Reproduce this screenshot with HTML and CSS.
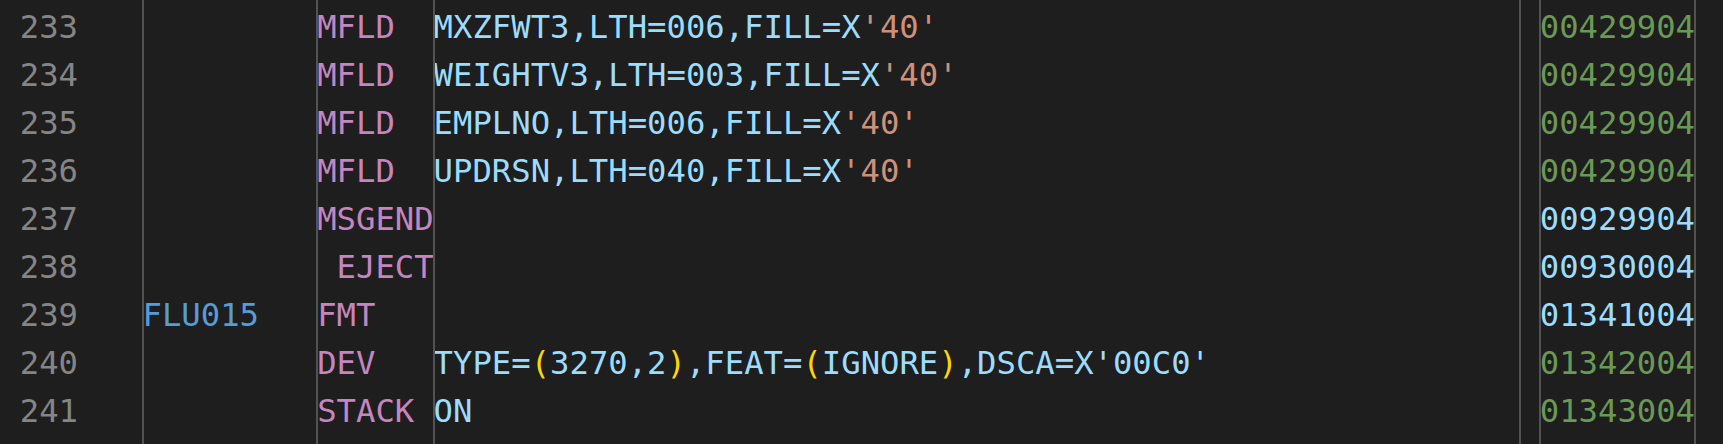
FILE: index.html
```html
<!DOCTYPE html>
<html>
<head>
<meta charset="utf-8">
<link rel="stylesheet" href="styles.css">
</head>
<body>
<div class="editor">
  <div class="gutter">
    <div class="ln">233</div>
    <div class="ln">234</div>
    <div class="ln">235</div>
    <div class="ln">236</div>
    <div class="ln">237</div>
    <div class="ln">238</div>
    <div class="ln">239</div>
    <div class="ln">240</div>
    <div class="ln">241</div>
  </div>
  <div class="code">
    <div class="ruler r0"></div>
    <div class="ruler r9"></div>
    <div class="ruler r15"></div>
    <div class="ruler r71"></div>
    <div class="ruler r72"></div>
    <div class="ruler r80"></div>
    <div class="line"><span class="lbl"></span><span class="op">MFLD</span><span class="arg">MXZFWT3,LTH=006,FILL=X<span class="str">'40'</span></span><span class="seq cmt">00429904</span></div>
    <div class="line"><span class="lbl"></span><span class="op">MFLD</span><span class="arg">WEIGHTV3,LTH=003,FILL=X<span class="str">'40'</span></span><span class="seq cmt">00429904</span></div>
    <div class="line"><span class="lbl"></span><span class="op">MFLD</span><span class="arg">EMPLNO,LTH=006,FILL=X<span class="str">'40'</span></span><span class="seq cmt">00429904</span></div>
    <div class="line"><span class="lbl"></span><span class="op">MFLD</span><span class="arg">UPDRSN,LTH=040,FILL=X<span class="str">'40'</span></span><span class="seq cmt">00429904</span></div>
    <div class="line"><span class="lbl"></span><span class="op">MSGEND</span><span class="arg"></span><span class="seq num">00929904</span></div>
    <div class="line"><span class="lbl"></span><span class="op"> EJECT</span><span class="arg"></span><span class="seq num">00930004</span></div>
    <div class="line"><span class="lbl">FLU015</span><span class="op">FMT</span><span class="arg"></span><span class="seq num">01341004</span></div>
    <div class="line"><span class="lbl"></span><span class="op">DEV</span><span class="arg">TYPE=<span class="br">(</span>3270,2<span class="br">)</span>,FEAT=<span class="br">(</span>IGNORE<span class="br">)</span>,DSCA=X'00C0'</span><span class="seq cmt">01342004</span></div>
    <div class="line"><span class="lbl"></span><span class="op">STACK</span><span class="arg">ON</span><span class="seq cmt">01343004</span></div>
  </div>
</div>
</body>
</html>
```
FILE: styles.css
```css
html, body {
  margin: 0;
  padding: 0;
  background: #1e1e1e;
}
body {
  width: 1723px;
  height: 444px;
  overflow: hidden;
}
.editor {
  display: flex;
  height: 444px;
  font-family: "DejaVu Sans Mono", monospace;
  font-size: 32.24px;
  line-height: 48px;
  background: #1e1e1e;
}
.gutter {
  width: 78px;
  padding-right: 64.5px;
  padding-top: 3px;
  flex: none;
  color: #858585;
  text-align: right;
}
.code {
  position: relative;
  flex: 1;
  padding-top: 3px;
}
.ruler {
  position: absolute;
  top: 0;
  bottom: 0;
  width: 2px;
  margin-left: -1px;
  background: #525252;
}
.r0 { left: 0; }
.r9 { left: 9ch; }
.r15 { left: 15ch; }
.r71 { left: 71ch; }
.r72 { left: 72ch; }
.r80 { left: 80ch; }
.line {
  display: grid;
  grid-template-columns: 9ch 6ch 57ch 8ch;
  height: 48px;
}
.line > span {
  white-space: pre;
}
.lbl { color: #569cd6; }
.op { color: #c586c0; }
.arg { color: #9cdcfe; }
.str { color: #ce9178; }
.br { color: #ffd700; }
.cmt { color: #6a9955; }
.num { color: #9cdcfe; }
```
